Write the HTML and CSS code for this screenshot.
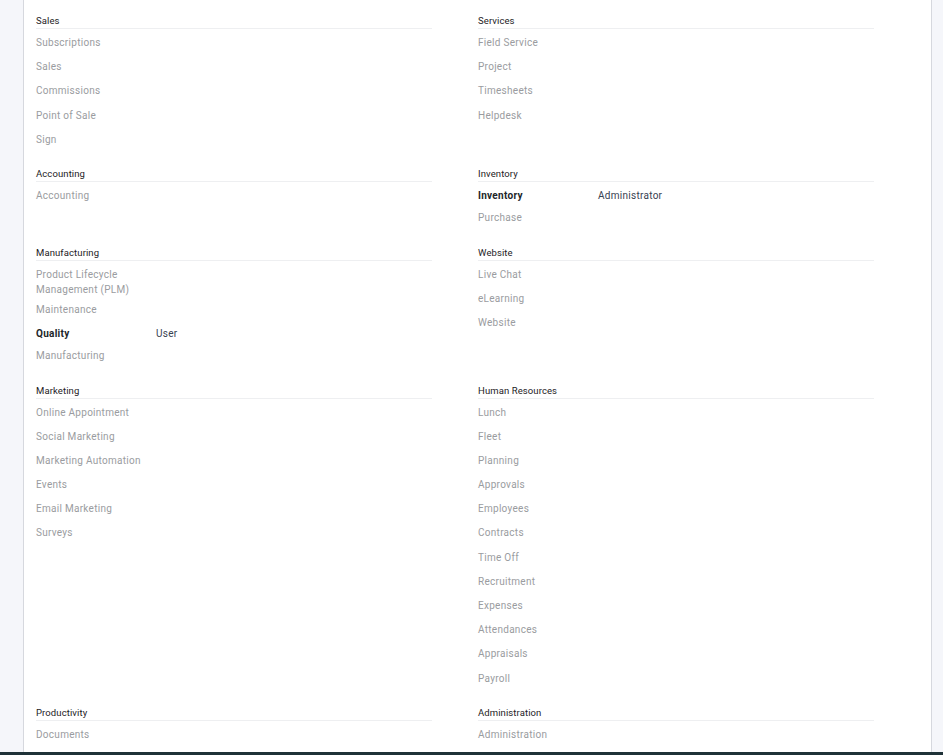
FILE: index.html
```html
<!DOCTYPE html>
<html>
<head>
<meta charset="utf-8">
<link rel="stylesheet" href="styles.css">
</head>
<body>
<div class="page">
  <div class="sheet">
    <div class="grid">
      <section class="block">
        <h3 class="title">Sales</h3>
        <div class="item">Subscriptions</div>
        <div class="item">Sales</div>
        <div class="item">Commissions</div>
        <div class="item">Point of Sale</div>
        <div class="item">Sign</div>
      </section>
      <section class="block">
        <h3 class="title">Services</h3>
        <div class="item">Field Service</div>
        <div class="item">Project</div>
        <div class="item">Timesheets</div>
        <div class="item">Helpdesk</div>
      </section>

      <section class="block">
        <h3 class="title">Accounting</h3>
        <div class="item">Accounting</div>
      </section>
      <section class="block">
        <h3 class="title">Inventory</h3>
        <div class="item set"><span class="label">Inventory</span><span class="value">Administrator</span></div>
        <div class="item">Purchase</div>
      </section>

      <section class="block">
        <h3 class="title">Manufacturing</h3>
        <div class="item wrap"><span class="label">Product Lifecycle Management (PLM)</span></div>
        <div class="item">Maintenance</div>
        <div class="item set"><span class="label">Quality</span><span class="value">User</span></div>
        <div class="item">Manufacturing</div>
      </section>
      <section class="block">
        <h3 class="title">Website</h3>
        <div class="item">Live Chat</div>
        <div class="item">eLearning</div>
        <div class="item">Website</div>
      </section>

      <section class="block">
        <h3 class="title">Marketing</h3>
        <div class="item">Online Appointment</div>
        <div class="item">Social Marketing</div>
        <div class="item">Marketing Automation</div>
        <div class="item">Events</div>
        <div class="item">Email Marketing</div>
        <div class="item">Surveys</div>
      </section>
      <section class="block">
        <h3 class="title">Human Resources</h3>
        <div class="item">Lunch</div>
        <div class="item">Fleet</div>
        <div class="item">Planning</div>
        <div class="item">Approvals</div>
        <div class="item">Employees</div>
        <div class="item">Contracts</div>
        <div class="item">Time Off</div>
        <div class="item">Recruitment</div>
        <div class="item">Expenses</div>
        <div class="item">Attendances</div>
        <div class="item">Appraisals</div>
        <div class="item">Payroll</div>
      </section>

      <section class="block">
        <h3 class="title">Productivity</h3>
        <div class="item">Documents</div>
      </section>
      <section class="block">
        <h3 class="title">Administration</h3>
        <div class="item">Administration</div>
      </section>
    </div>
  </div>
</div>
<div class="bottombar"></div>
</body>
</html>
```

FILE: styles.css
```css
html, body {
  margin: 0;
  padding: 0;
}
body {
  height: 755px;
  overflow: hidden;
  display: flex;
  flex-direction: column;
  background: #f5f6fa;
  font-family: Roboto, "Liberation Sans", sans-serif;
}
.page {
  flex: 1;
  min-height: 0;
  overflow: hidden;
  padding-left: 23px;
}
.sheet {
  width: 909px;
  height: 100%;
  box-sizing: border-box;
  background: #ffffff;
  border-left: 1px solid #d6d8de;
  border-right: 1px solid #d6d8de;
  padding: 15px 0 0 12px;
}
.grid {
  display: grid;
  grid-template-columns: 396px 396px;
  column-gap: 46px;
  row-gap: 17px;
  align-items: start;
}
.title {
  margin: 0 0 1px 0;
  font-size: 9.5px;
  line-height: 11px;
  font-weight: 400;
  color: #1d2125;
  padding-bottom: 2px;
  border-bottom: 1px solid #eeeff1;
  letter-spacing: 0.1px;
}
.item {
  display: flex;
  font-size: 10px;
  line-height: 15px;
  padding: 5px 0 4.2px 0;
  color: #9a9ca0;
  letter-spacing: 0.28px;
}
.item.set {
  padding: 5px 0 2.5px 0;
}
.item.wrap {
  padding-bottom: 0;
}
.label {
  width: 120px;
  flex: none;
}
.item.set .label {
  color: #212529;
  font-weight: 700;
}
.value {
  color: #374151;
}
.bottombar {
  height: 3px;
  flex: none;
  background: #1f3238;
}
```
